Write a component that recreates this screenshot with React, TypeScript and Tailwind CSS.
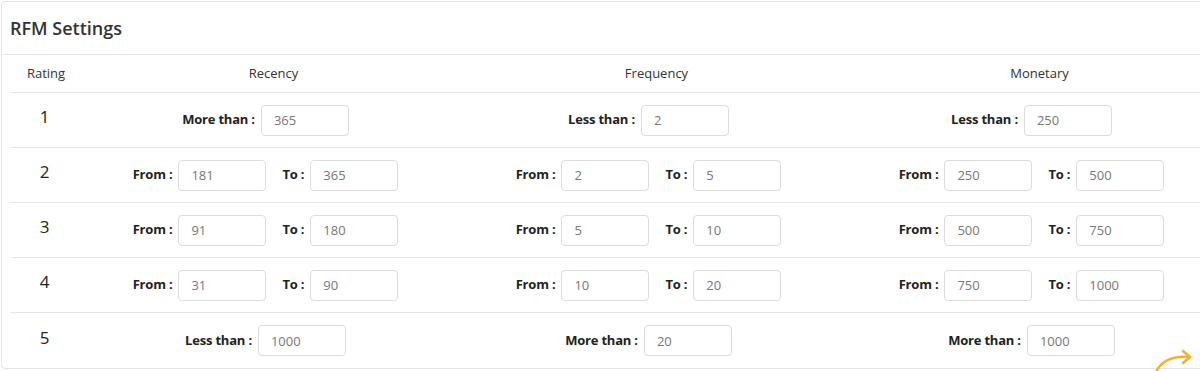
import React from 'react';

type Cell =
  | { kind: 'single'; label: string; value: string }
  | { kind: 'range'; from: string; to: string };

const rows: { rating: number; cells: Cell[] }[] = [
  {
    rating: 1,
    cells: [
      { kind: 'single', label: 'More than', value: '365' },
      { kind: 'single', label: 'Less than', value: '2' },
      { kind: 'single', label: 'Less than', value: '250' },
    ],
  },
  {
    rating: 2,
    cells: [
      { kind: 'range', from: '181', to: '365' },
      { kind: 'range', from: '2', to: '5' },
      { kind: 'range', from: '250', to: '500' },
    ],
  },
  {
    rating: 3,
    cells: [
      { kind: 'range', from: '91', to: '180' },
      { kind: 'range', from: '5', to: '10' },
      { kind: 'range', from: '500', to: '750' },
    ],
  },
  {
    rating: 4,
    cells: [
      { kind: 'range', from: '31', to: '90' },
      { kind: 'range', from: '10', to: '20' },
      { kind: 'range', from: '750', to: '1000' },
    ],
  },
  {
    rating: 5,
    cells: [
      { kind: 'single', label: 'Less than', value: '1000' },
      { kind: 'single', label: 'More than', value: '20' },
      { kind: 'single', label: 'More than', value: '1000' },
    ],
  },
];

function Field({ label, value }: { label: string; value: string }) {
  return (
    <>
      <span className="mr-[6px] text-[13px] font-bold tracking-[-0.2px] text-[#222]">{label}&nbsp;:</span>
      <input
        readOnly
        value={value}
        className="mr-4 h-[31px] w-[88px] rounded-[4px] border border-[#dcdcdc] bg-white px-3 text-[13px] text-[#777] outline-none"
      />
    </>
  );
}

export default function App() {
  return (
    <div className="h-[371px] w-[1200px] overflow-hidden bg-white pl-px pt-px font-['Open_Sans',sans-serif]">
      <div className="relative h-[368px] w-[1239px] rounded-sm border border-[#e3e3e3] bg-white">
        <div className="flex h-[53px] items-center border-b border-[#e6e6e6] px-[8px]">
          <h2 className="text-[18px] font-semibold text-[#333]">RFM Settings</h2>
        </div>
        <div className="px-2">
          <div className="grid h-[38px] grid-cols-[72px_383px_383px_383px] items-center border-b border-[#e6e6e6] text-center text-[13px] text-[#333]">
            <div>Rating</div>
            <div>Recency</div>
            <div>Frequency</div>
            <div>Monetary</div>
          </div>
          {rows.map((row, i) => (
            <div
              key={row.rating}
              className={`grid h-[55px] grid-cols-[72px_383px_383px_383px] items-center ${
                i < rows.length - 1 ? 'border-b border-[#e6e6e6]' : ''
              }`}
            >
              <div className="pb-[6px] pr-[3px] text-center text-[17px] text-[#222]">{row.rating}</div>
              {row.cells.map((cell, j) => (
                <div key={j} className="flex items-center justify-center">
                  {cell.kind === 'single' ? (
                    <Field label={cell.label} value={cell.value} />
                  ) : (
                    <>
                      <Field label="From" value={cell.from} />
                      <Field label="To" value={cell.to} />
                    </>
                  )}
                </div>
              ))}
            </div>
          ))}
        </div>
      </div>
      <svg
        className="absolute left-[1150px] top-[346px]"
        width="46"
        height="26"
        viewBox="0 0 46 26"
        fill="none"
      >
        <path d="M6 26 C 12 14, 24 10, 38 11" stroke="#f7b02a" strokeWidth="2.5" strokeLinecap="round" />
        <path d="M33 5 L 40 11 L 33 17" stroke="#f7b02a" strokeWidth="2.5" strokeLinecap="round" strokeLinejoin="round" />
      </svg>
    </div>
  );
}
